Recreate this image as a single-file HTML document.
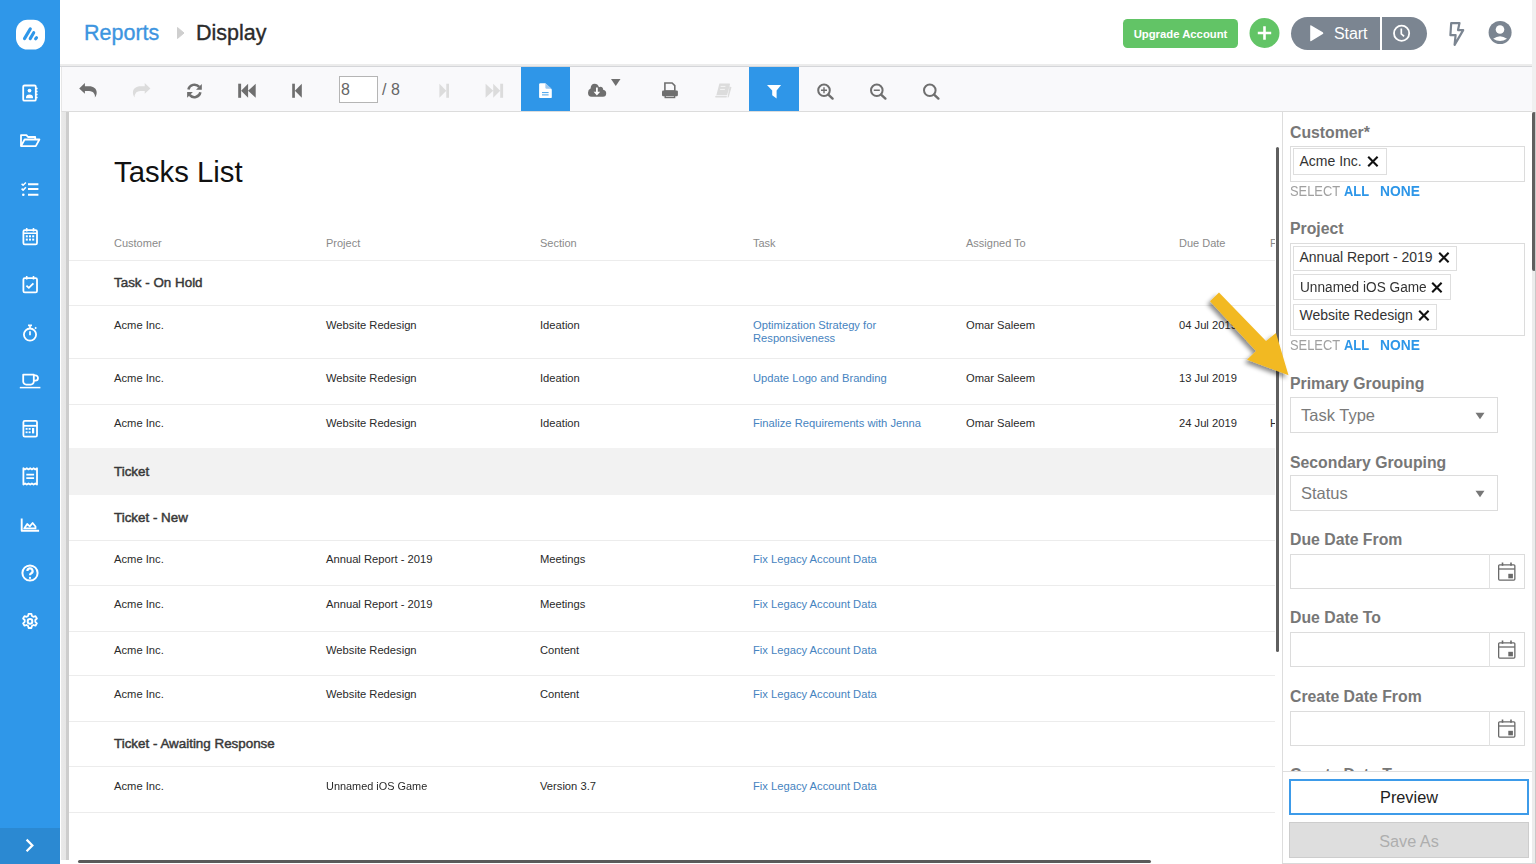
<!DOCTYPE html>
<html><head><meta charset="utf-8">
<style>
*{box-sizing:border-box;margin:0;padding:0}
html,body{width:1536px;height:864px;overflow:hidden;background:#fff;font-family:"Liberation Sans",sans-serif}
.a{position:absolute}
#side{left:0;top:0;width:60px;height:864px;background:#2f97e9}
#side .tog{left:0;top:828px;width:60px;height:36px;background:#2b89d2}
#side svg{position:absolute}
#hdr{left:60px;top:0;width:1476px;height:67px;background:#fff;border-bottom:1px solid #d5d6d9;box-shadow:inset 0 -2px 0 #ececec}
#tb{left:61px;top:67px;width:1471px;height:45px;background:#f9f9fb;border-bottom:1px solid #dcdcdc;border-left:1px solid #e6e6e6}
.ic{position:absolute}
.btnb{position:absolute;top:67px;height:44px;background:#2f96e8}
#rep{left:61px;top:112px;width:1221px;height:752px;background:#fff;overflow:hidden}
.t{position:absolute;white-space:nowrap}
.hd{font-size:11px;line-height:11px;color:#8a8a8a}
.ttl{font-size:29.3px;line-height:29.3px;color:#111}
.cell{font-size:11.2px;line-height:11.2px;color:#2a2a2a}
.grp{font-size:13.4px;line-height:13.4px;font-weight:normal;color:#383838;-webkit-text-stroke:0.45px #383838}
.lnk{font-size:11.2px;line-height:11.2px;color:#4683c0}
.rl{position:absolute;left:69px;width:1206px;height:1px;background:#ececec}
#panel{left:1282px;top:112px;width:250px;height:752px;background:#fff;border-left:1px solid #dddddd;overflow:hidden}
.lbl{position:absolute;left:7px;font-size:17px;font-weight:bold;color:#777;white-space:nowrap}
.box{position:absolute;border:1px solid #dcdcdc}
.tag{position:absolute;left:2px;height:26px;border:1px dotted #d2d2d2;font-size:14.5px;color:#333;padding:4px 0 0 7px;white-space:nowrap}
.sel{position:absolute;left:7px;font-size:14px;color:#9a9a9a;white-space:nowrap}
.sel b{color:#2d96e8;font-weight:bold}
</style></head><body>

<div id="side" class="a">
  <div class="tog a"></div>
  <svg width="60" height="864" style="left:0;top:0" viewBox="0 0 60 864">
   <rect x="16" y="19.8" width="29" height="29.8" rx="11.5" fill="#fff"/>
   <g stroke="#2f97e9" stroke-width="3.1" stroke-linecap="round" fill="none">
    <path d="M24.5 38.6L30.3 28.9M30.2 38.6L33.7 32.7M35.6 38.8L36.5 37.7"/>
   </g>
   <g stroke="#fff" stroke-width="1.8" fill="none" stroke-linejoin="round">
    <!-- contact -->
    <rect x="23.2" y="85.5" width="12.6" height="15.2" rx="1.3"/>
    <path d="M36 88.5h1.6M36 91.5h1.6M36 94.5h1.6M36 97.5h1.6" stroke-width="1.3"/>
    <circle cx="29.5" cy="90.6" r="1.9" fill="#fff" stroke="none"/>
    <path d="M26 97.6a3.5 3.2 0 0 1 7 0v0.6h-7z" fill="#fff" stroke="none"/>
    <!-- folder -->
    <path d="M21 146.1V135.1h5.4l1.6 1.9h7.2v2.6"/>
    <path d="M21 146.1l3.6-6.6h14.8l-3.6 6.6z"/>
    <!-- checklist -->
    <path d="M21.6 183.8l1.5 1.5l2.8-2.8M21.6 188.6l1.5 1.5l2.8-2.8" stroke-width="1.5"/>
    <circle cx="23.3" cy="194.7" r="1.3" fill="#fff" stroke="none"/>
    <path d="M28 184.2h10.4M28 189h10.4M28 194.7h10.4" stroke-width="1.9"/>
    <!-- calendar -->
    <rect x="23.4" y="230.2" width="13.6" height="14.2" rx="1.4"/>
    <path d="M26.7 228v3.6M33.5 228v3.6M23.4 233.2h13.6" stroke-width="1.6"/>
    <g fill="#fff" stroke="none"><rect x="25.8" y="235.3" width="2" height="2"/><rect x="29" y="235.3" width="2" height="2"/><rect x="32.2" y="235.3" width="2" height="2"/><rect x="25.8" y="238.6" width="2" height="2"/><rect x="29" y="238.6" width="2" height="2"/><rect x="32.2" y="238.6" width="2" height="2"/></g>
    <!-- calendar check -->
    <rect x="23.4" y="278.2" width="13.6" height="14.2" rx="1.4"/>
    <path d="M26.7 276v3.6M33.5 276v3.6" stroke-width="1.6"/>
    <path d="M26.4 285.6l2.4 2.3l4.6-4.5" stroke-width="1.8"/>
    <!-- stopwatch -->
    <circle cx="30" cy="334.6" r="6.1"/>
    <path d="M28 325.3h4M30 325.3v3M30 331.2v4M35 328.6l1.3-1.3" stroke-width="1.7"/>
    <!-- coffee -->
    <path d="M23.2 374.6h10.6v7a3 3 0 0 1-3 3h-4.6a3 3 0 0 1-3-3z"/>
    <path d="M33.8 375.4h1.6a2.6 2.6 0 0 1 0 5.2h-1.6"/>
    <path d="M19.8 387.6h20.6" stroke-width="1.5"/>
    <!-- calculator -->
    <rect x="23.4" y="420.8" width="13.6" height="15.8" rx="1.4"/>
    <path d="M23.4 425.8h13.6"/>
    <g fill="#fff" stroke="none"><rect x="25.6" y="428" width="2" height="1.8"/><rect x="28.6" y="428" width="2" height="1.8"/><rect x="25.6" y="431.4" width="2" height="1.8"/><rect x="28.6" y="431.4" width="2" height="1.8"/><rect x="32" y="428" width="2.2" height="5.4"/></g>
    <!-- receipt -->
    <path d="M23.4 468.2l1.7 1.2l1.7-1.2l1.7 1.2l1.7-1.2l1.7 1.2l1.7-1.2l1.7 1.2l1.7-1.2v16.4l-1.7-1.2l-1.7 1.2l-1.7-1.2l-1.7 1.2l-1.7-1.2l-1.7 1.2l-1.7-1.2l-1.7 1.2z"/>
    <path d="M26.3 474.6h7.8M26.3 478.2h7.8" stroke-width="1.8"/>
    <!-- chart -->
    <path d="M21.7 518.6v12.2h17.4" stroke-width="1.9"/>
    <path d="M24.2 528.4l3-4.4l2.6 2.3l2.8-3.3l2.9 3.5v1.9z" stroke-width="1.8"/>
    <!-- question -->
    <circle cx="30" cy="573" r="7.6" stroke-width="2"/>
    <path d="M27.4 571a2.6 2.6 0 1 1 3.9 2.2c-0.9 0.5-1.3 0.9-1.3 2" stroke-width="2.2"/>
    <circle cx="30" cy="577.9" r="1.1" fill="#fff" stroke="none"/>
    <!-- gear -->
    <path d="M28.6 613.8h2.8l0.5 2.1l1.5 0.9l2.1-0.7l1.4 2.4l-1.6 1.5v1.8l1.6 1.5l-1.4 2.4l-2.1-0.7l-1.5 0.9l-0.5 2.1h-2.8l-0.5-2.1l-1.5-0.9l-2.1 0.7l-1.4-2.4l1.6-1.5v-1.8l-1.6-1.5l1.4-2.4l2.1 0.7l1.5-0.9z"/>
    <circle cx="30" cy="621.4" r="2.3" stroke-width="2"/>
    <!-- chevron -->
    <path d="M26.6 839.6l5.8 5.8l-5.8 5.8" stroke-width="2.2" stroke-linecap="butt" stroke-linejoin="miter"/>
   </g>
  </svg>
</div>

<div id="hdr" class="a"></div>
<div class="a" style="left:1532px;top:0;width:4px;height:112px;background:#f0f0f0"></div>
<div class="t" style="left:84px;top:21px;font-size:21.5px;line-height:24px;color:#3d95e0;-webkit-text-stroke:0.35px #3d95e0">Reports</div>
<div class="t" style="left:196px;top:21px;font-size:21.5px;line-height:24px;color:#2b2b2b;-webkit-text-stroke:0.35px #2b2b2b">Display</div>
<svg class="a" style="left:0;top:0" width="1536" height="112" viewBox="0 0 1536 112">
  <path d="M177.5 27.5L184 33L177.5 38.5Z" fill="#cfcfcf" stroke="#cfcfcf" stroke-width="1" stroke-linejoin="round"/>
  <rect x="1123" y="19" width="115" height="29" rx="4.5" fill="#62c466"/>
  <circle cx="1264.5" cy="33" r="15" fill="#62c466"/>
  <path d="M1264.5 26.3v13.4M1257.8 33h13.4" stroke="#fff" stroke-width="2.6"/>
  <rect x="1291" y="17" width="136" height="33" rx="16.5" fill="#7b8591"/>
  <rect x="1380" y="17" width="2" height="33" fill="#fff"/>
  <path d="M1310.2 26.2Q1310 24.8 1311.3 25.4L1322.8 32.3Q1324 33.2 1322.8 34L1311.3 41Q1310 41.6 1310.2 40.2Z" fill="#fff"/>
  <circle cx="1401.6" cy="33.2" r="7.6" fill="none" stroke="#fff" stroke-width="1.8"/>
  <path d="M1401.3 28.4V33.9L1404.1 36.4" fill="none" stroke="#fff" stroke-width="1.7"/>
  <path d="M1451.2 23.1H1459.5L1458 30.1H1463.2L1454.6 44.9L1455.6 35.2H1450.4Z" fill="none" stroke="#7b8591" stroke-width="2.2" stroke-linejoin="round"/>
  <circle cx="1500.1" cy="32.5" r="11.5" fill="#7b8591"/>
  <circle cx="1500" cy="29.5" r="4.3" fill="#fff"/>
  <path d="M1493.2 38.8Q1500 33.5 1507 38.8Q1500 43.2 1493.2 38.8Z" fill="#fff"/>
</svg>
<div class="t" style="left:1123px;top:26px;width:115px;text-align:center;font-size:11.3px;line-height:16px;font-weight:bold;color:#fff">Upgrade Account</div>
<div class="t" style="left:1334px;top:24px;font-size:16px;line-height:19px;color:#fff;letter-spacing:-0.1px">Start</div>
<div id="tb" class="a"></div>
<div class="btnb" style="left:521px;width:49px"></div>
<div class="btnb" style="left:749px;width:50px"></div>
<div class="a" style="left:339px;top:76px;width:39px;height:27px;background:#fff;border:1px solid #b5b5b5"></div>
<div class="t" style="left:341px;top:80px;font-size:16px;line-height:19px;color:#666">8</div>
<div class="t" style="left:382px;top:80px;font-size:16px;line-height:19px;color:#666">/ 8</div>
<svg class="a" style="left:0;top:0" width="1536" height="112" viewBox="0 0 1536 112">
 <g fill="#6f6f6f">
  <path d="M79.2 88.5L84.9 83V86.2H89C93.5 86.2 96.7 88.6 96.7 92.4C96.7 94.4 96 96 94.8 97.4C95.1 96 95 94.8 94 93.4C93 92 91.5 91.1 89 91.1H84.9V93.8Z"/>
  <path fill="#dcdcdc" transform="translate(229.6 0) scale(-1 1)" d="M79.2 88.5L84.9 83V86.2H89C93.5 86.2 96.7 88.6 96.7 92.4C96.7 94.4 96 96 94.8 97.4C95.1 96 95 94.8 94 93.4C93 92 91.5 91.1 89 91.1H84.9V93.8Z"/>
  <path d="M188.4 89.6A6.2 6.2 0 0 1 199.2 86.9" fill="none" stroke="#6f6f6f" stroke-width="2.5"/>
  <path d="M196 89.8H201.8V84Z"/>
  <path d="M200.4 92.2A6.2 6.2 0 0 1 189.6 94.9" fill="none" stroke="#6f6f6f" stroke-width="2.5"/>
  <path d="M187.1 92H192.9L187.1 97.8Z"/>
  <rect x="238.2" y="83.7" width="2.9" height="14.1"/>
  <path d="M241.1 90.75L248.1 83.7V97.8Z M248.1 90.75L255.7 83.7V97.8Z"/>
  <rect x="292.2" y="83.7" width="2.7" height="14.1"/>
  <path d="M294.9 90.75L301.8 83.7V97.8Z"/>
  <g fill="#dcdcdc">
   <rect x="446.3" y="83.7" width="2.7" height="14.1"/>
   <path d="M446.3 90.75L439.4 83.7V97.8Z"/>
   <rect x="500.2" y="83.7" width="2.9" height="14.1"/>
   <path d="M500.2 90.75L493.2 83.7V97.8Z M493.2 90.75L485.6 83.7V97.8Z"/>
  </g>
  <path fill="#fff" d="M540.4 83.2H545.4L551.8 89.4V96.9Q551.8 98.1 550.6 98.1H540.4Q539.1 98.1 539.1 96.9V84.5Q539.1 83.2 540.4 83.2Z"/>
  <path fill="#9cc8f0" d="M545.4 83.2V87.6Q545.4 88.8 546.6 88.8H551.8Z"/>
  <path d="M542 92.6h6.6M542 94.9h6.6" stroke="#2f96e8" stroke-width="0.9"/>
  <path d="M591.5 96.8H603Q606.2 96.8 606.2 93.2Q606.2 90.2 603.2 89.7Q603 86.8 600.4 86.8Q599.5 86.8 599 87.2Q597.8 83.8 594.6 83.8Q590.8 83.8 590.6 88.6Q588 89.6 588 92.8Q588 96.8 591.5 96.8Z"/>
  <path fill="#fff" d="M596 87.6h1.8v4.2h2.4l-3.3 3.6l-3.3-3.6h2.4z"/>
  <path d="M611 78.9H620.5L615.75 86.1Z"/>
  <path d="M664.9 83h7.2l2.7 2.7v5.4h-9.9z" fill="none" stroke="#6f6f6f" stroke-width="1.6"/>
  <rect x="662" y="90.6" width="15.9" height="5.6" rx="1.2"/>
  <rect x="665.2" y="94.2" width="9.4" height="3.3" fill="none" stroke="#6f6f6f" stroke-width="1.4"/>
  <path fill="#dcdcdc" d="M719.4 83.4H729.4Q730.2 83.4 730 84.2L727.2 95.1H716.4Z M716.1 95.7H727L726.5 97.6H716Q714.8 97.6 715.1 96.6Z M729.5 86.5L731.5 87.2L728.7 97.2L727.5 97.6Z"/><path d="M720.6 86.4h4.8M720.1 89.4h4.8" stroke="#f7f7f7" stroke-width="0.9"/>
  <path fill="#fff" d="M767 84.9H781.1L776.6 90.5V98.4L772.2 95.2V90.5Z"/>
  <g fill="none" stroke="#6f6f6f" stroke-width="2">
   <circle cx="824" cy="90.3" r="5.8"/><path d="M828.3 94.6L832.6 98.6" stroke-width="2.4" stroke-linecap="round"/>
   <circle cx="876.8" cy="90.3" r="5.8"/><path d="M881.1 94.6L885.4 98.6" stroke-width="2.4" stroke-linecap="round"/>
   <circle cx="929.8" cy="90.3" r="5.8"/><path d="M934.1 94.6L938.4 98.6" stroke-width="2.4" stroke-linecap="round"/>
   <path d="M821 90.3h6M824 87.3v6M873.8 90.3h6" stroke-width="1.4"/>
  </g>
 </g>
</svg>

<div id="rep" class="a">
 <div class="a" style="left:0;top:0;width:8px;height:748px;background:linear-gradient(to right,#e9e9e9 0,#e6e6e6 5px,#cdcdcd 5px,#cdcdcd 8px)"></div>
 <div class="a" id="repin" style="left:-61px;top:-112px;width:1275px;height:864px;overflow:hidden">
<div class="t hd" style="left:114.0px;top:237.99px">Customer</div>
<div class="t hd" style="left:326.0px;top:237.99px">Project</div>
<div class="t hd" style="left:540.0px;top:237.99px">Section</div>
<div class="t hd" style="left:753.0px;top:237.99px">Task</div>
<div class="t hd" style="left:966.0px;top:237.99px">Assigned To</div>
<div class="t hd" style="left:1179.0px;top:237.99px">Due Date</div>
<div class="t hd" style="left:1270.0px;top:237.99px">Priority</div>
<div class="a" style="left:69px;top:448px;width:1206px;height:47px;background:#f2f2f2"></div>
<div class="rl" style="top:260.0px"></div>
<div class="rl" style="top:305.0px"></div>
<div class="rl" style="top:358.0px"></div>
<div class="rl" style="top:403.5px"></div>
<div class="rl" style="top:675.0px"></div>
<div class="rl" style="top:720.5px"></div>
<div class="rl" style="top:766.0px"></div>
<div class="rl" style="top:811.5px"></div>
<div class="rl" style="top:540.0px"></div>
<div class="rl" style="top:585.0px"></div>
<div class="rl" style="top:630.5px"></div>
<div class="t grp" style="left:114.0px;top:276.15px">Task - On Hold</div>
<div class="t grp" style="left:114.0px;top:465.05px">Ticket</div>
<div class="t grp" style="left:114.0px;top:510.55px">Ticket - New</div>
<div class="t grp" style="left:114.0px;top:736.85px">Ticket - Awaiting Response</div>
<div class="t cell" style="left:114.0px;top:319.52px">Acme Inc.</div>
<div class="t cell" style="left:326.0px;top:319.52px">Website Redesign</div>
<div class="t cell" style="left:540.0px;top:319.52px">Ideation</div>
<div class="t lnk" style="left:753.0px;top:319.52px">Optimization Strategy for</div>
<div class="t cell" style="left:966.0px;top:319.52px">Omar Saleem</div>
<div class="t cell" style="left:1179.0px;top:319.52px">04 Jul 2019</div>
<div class="t cell" style="left:114.0px;top:372.52px">Acme Inc.</div>
<div class="t cell" style="left:326.0px;top:372.52px">Website Redesign</div>
<div class="t cell" style="left:540.0px;top:372.52px">Ideation</div>
<div class="t lnk" style="left:753.0px;top:372.52px">Update Logo and Branding</div>
<div class="t cell" style="left:966.0px;top:372.52px">Omar Saleem</div>
<div class="t cell" style="left:1179.0px;top:372.52px">13 Jul 2019</div>
<div class="t cell" style="left:114.0px;top:417.82px">Acme Inc.</div>
<div class="t cell" style="left:326.0px;top:417.82px">Website Redesign</div>
<div class="t cell" style="left:540.0px;top:417.82px">Ideation</div>
<div class="t lnk" style="left:753.0px;top:417.82px">Finalize Requirements with Jenna</div>
<div class="t cell" style="left:966.0px;top:417.82px">Omar Saleem</div>
<div class="t cell" style="left:1179.0px;top:417.82px">24 Jul 2019</div>
<div class="t cell" style="left:1270.0px;top:417.82px">High</div>
<div class="t cell" style="left:114.0px;top:553.52px">Acme Inc.</div>
<div class="t cell" style="left:326.0px;top:553.52px">Annual Report - 2019</div>
<div class="t cell" style="left:540.0px;top:553.52px">Meetings</div>
<div class="t lnk" style="left:753.0px;top:553.52px">Fix Legacy Account Data</div>
<div class="t cell" style="left:114.0px;top:599.22px">Acme Inc.</div>
<div class="t cell" style="left:326.0px;top:599.22px">Annual Report - 2019</div>
<div class="t cell" style="left:540.0px;top:599.22px">Meetings</div>
<div class="t lnk" style="left:753.0px;top:599.22px">Fix Legacy Account Data</div>
<div class="t cell" style="left:114.0px;top:644.72px">Acme Inc.</div>
<div class="t cell" style="left:326.0px;top:644.72px">Website Redesign</div>
<div class="t cell" style="left:540.0px;top:644.72px">Content</div>
<div class="t lnk" style="left:753.0px;top:644.72px">Fix Legacy Account Data</div>
<div class="t cell" style="left:114.0px;top:689.22px">Acme Inc.</div>
<div class="t cell" style="left:326.0px;top:689.22px">Website Redesign</div>
<div class="t cell" style="left:540.0px;top:689.22px">Content</div>
<div class="t lnk" style="left:753.0px;top:689.22px">Fix Legacy Account Data</div>
<div class="t cell" style="left:114.0px;top:780.52px">Acme Inc.</div>
<div class="t cell" style="left:326.0px;top:780.52px"><span style="display:inline-block;transform:scaleX(0.975);transform-origin:0 0">Unnamed iOS Game</span></div>
<div class="t cell" style="left:540.0px;top:780.52px">Version 3.7</div>
<div class="t lnk" style="left:753.0px;top:780.52px">Fix Legacy Account Data</div>
<div class="t lnk" style="left:753.0px;top:332.82px">Responsiveness</div>
<div class="t ttl" style="left:114.0px;top:156.90px">Tasks List</div>
 </div>
 <div class="a" style="left:1215px;top:35px;width:3px;height:505px;background:#5f5f5f;border-radius:2px"></div>
 <div class="a" style="left:17px;top:748px;width:1073px;height:3px;background:#5a5a5a;border-radius:2px"></div>
</div>

<div id="panel" class="a"></div>
<div class="a" id="pin" style="left:0;top:0;width:1536px;height:771px;overflow:hidden;pointer-events:none">
<div class="t" style="left:1290px;top:183.90px;font-size:14.3px;line-height:14.3px;color:#a0a0a0;transform:scaleX(0.9);transform-origin:0 0">SELECT</div>
<div class="t" style="left:1343.6px;top:183.90px;font-size:14.3px;line-height:14.3px;color:#2d96e8;font-weight:bold;transform:scaleX(0.9);transform-origin:0 0">ALL</div>
<div class="t" style="left:1379.5px;top:183.90px;font-size:14.3px;line-height:14.3px;color:#2d96e8;font-weight:bold;transform:scaleX(0.965);transform-origin:0 0">NONE</div>
<div class="t" style="left:1290px;top:337.70px;font-size:14.3px;line-height:14.3px;color:#a0a0a0;transform:scaleX(0.9);transform-origin:0 0">SELECT</div>
<div class="t" style="left:1343.6px;top:337.70px;font-size:14.3px;line-height:14.3px;color:#2d96e8;font-weight:bold;transform:scaleX(0.9);transform-origin:0 0">ALL</div>
<div class="t" style="left:1379.5px;top:337.70px;font-size:14.3px;line-height:14.3px;color:#2d96e8;font-weight:bold;transform:scaleX(0.965);transform-origin:0 0">NONE</div>
<div class="t" style="left:1290.0px;top:124.93px;font-size:15.80px;line-height:15.80px;font-weight:bold;color:#777">Customer*</div>
<div class="t" style="left:1290.0px;top:220.93px;font-size:15.80px;line-height:15.80px;font-weight:bold;color:#777">Project</div>
<div class="t" style="left:1290.0px;top:376.43px;font-size:15.80px;line-height:15.80px;font-weight:bold;color:#777">Primary Grouping</div>
<div class="t" style="left:1290.0px;top:455.33px;font-size:15.80px;line-height:15.80px;font-weight:bold;color:#777">Secondary Grouping</div>
<div class="t" style="left:1290.0px;top:532.23px;font-size:15.80px;line-height:15.80px;font-weight:bold;color:#777">Due Date From</div>
<div class="t" style="left:1290.0px;top:610.33px;font-size:15.80px;line-height:15.80px;font-weight:bold;color:#777">Due Date To</div>
<div class="t" style="left:1290.0px;top:688.63px;font-size:15.80px;line-height:15.80px;font-weight:bold;color:#777">Create Date From</div>
<div class="t" style="left:1290.0px;top:767.13px;font-size:15.80px;line-height:15.80px;font-weight:bold;color:#777">Create Date To</div>
<div class="a" style="left:1290.0px;top:146.0px;width:234.5px;height:36.0px;border:1px solid #dcdcdc"></div>
<div class="a" style="left:1292.5px;top:148.3px;width:94.2px;height:26.7px;border:1px solid #dedede"></div>
<div class="t" style="left:1299.5px;top:154.05px;font-size:14.00px;line-height:14.00px;color:#333">Acme Inc.</div>
<svg class="a" style="left:1367.2px;top:155.9px" width="12" height="11" viewBox="0 0 12 11"><path d="M1.2 0.8L10.6 10.2M10.6 0.8L1.2 10.2" stroke="#111" stroke-width="2.1"/></svg>
<div class="a" style="left:1290.0px;top:242.6px;width:234.5px;height:93.4px;border:1px solid #dcdcdc"></div>
<div class="a" style="left:1292.5px;top:245.6px;width:164.5px;height:25.4px;border:1px solid #dedede"></div>
<div class="t" style="left:1299.5px;top:250.15px;font-size:14.00px;line-height:14.00px;color:#333">Annual Report - 2019</div>
<svg class="a" style="left:1437.5px;top:252.0px" width="12" height="11" viewBox="0 0 12 11"><path d="M1.2 0.8L10.6 10.2M10.6 0.8L1.2 10.2" stroke="#111" stroke-width="2.1"/></svg>
<div class="a" style="left:1292.5px;top:274.0px;width:158.2px;height:26.3px;border:1px solid #dedede"></div>
<div class="t" style="left:1299.5px;top:279.75px;font-size:14.00px;line-height:14.00px;color:#333"><span style="display:inline-block;transform:scaleX(0.975);transform-origin:0 0">Unnamed iOS Game</span></div>
<svg class="a" style="left:1431.2px;top:281.6px" width="12" height="11" viewBox="0 0 12 11"><path d="M1.2 0.8L10.6 10.2M10.6 0.8L1.2 10.2" stroke="#111" stroke-width="2.1"/></svg>
<div class="a" style="left:1292.5px;top:303.7px;width:144.5px;height:26.1px;border:1px solid #dedede"></div>
<div class="t" style="left:1299.5px;top:308.35px;font-size:14.00px;line-height:14.00px;color:#333">Website Redesign</div>
<svg class="a" style="left:1417.5px;top:310.2px" width="12" height="11" viewBox="0 0 12 11"><path d="M1.2 0.8L10.6 10.2M10.6 0.8L1.2 10.2" stroke="#111" stroke-width="2.1"/></svg>
<div class="a" style="left:1290.0px;top:397.0px;width:207.5px;height:36.0px;border:1px solid #dcdcdc"></div>
<div class="t" style="left:1301.0px;top:407.03px;font-size:16.50px;line-height:16.50px;color:#7a7a7a">Task Type</div>
<svg class="a" style="left:1475px;top:412.0px" width="10" height="8" viewBox="0 0 10 8"><path d="M0.5 0.8H9.5L5 7.2Z" fill="#777"/></svg>
<div class="a" style="left:1290.0px;top:475.0px;width:207.5px;height:36.0px;border:1px solid #dcdcdc"></div>
<div class="t" style="left:1301.0px;top:485.03px;font-size:16.50px;line-height:16.50px;color:#7a7a7a">Status</div>
<svg class="a" style="left:1475px;top:490.0px" width="10" height="8" viewBox="0 0 10 8"><path d="M0.5 0.8H9.5L5 7.2Z" fill="#777"/></svg>
<div class="a" style="left:1290.0px;top:553.7px;width:234.5px;height:35.0px;border:1px solid #dcdcdc"></div>
<div class="a" style="left:1489.0px;top:553.7px;width:1.0px;height:35.0px;background:#e2e2e2"></div>
<svg class="a" style="left:1497px;top:562.0px" width="20" height="20" viewBox="0 0 20 20"><g fill="none" stroke="#6a6a6a" stroke-width="1.3"><rect x="1.65" y="2.8" width="16.2" height="15.3" rx="1"/><path d="M1.65 7H17.85"/><path d="M5.5 0.6V3.8M14 0.6V3.8" stroke-width="1.6"/></g><rect x="11.3" y="11.8" width="4.6" height="4.5" fill="#6a6a6a"/></svg>
<div class="a" style="left:1290.0px;top:631.7px;width:234.5px;height:35.0px;border:1px solid #dcdcdc"></div>
<div class="a" style="left:1489.0px;top:631.7px;width:1.0px;height:35.0px;background:#e2e2e2"></div>
<svg class="a" style="left:1497px;top:640.0px" width="20" height="20" viewBox="0 0 20 20"><g fill="none" stroke="#6a6a6a" stroke-width="1.3"><rect x="1.65" y="2.8" width="16.2" height="15.3" rx="1"/><path d="M1.65 7H17.85"/><path d="M5.5 0.6V3.8M14 0.6V3.8" stroke-width="1.6"/></g><rect x="11.3" y="11.8" width="4.6" height="4.5" fill="#6a6a6a"/></svg>
<div class="a" style="left:1290.0px;top:710.5px;width:234.5px;height:35.0px;border:1px solid #dcdcdc"></div>
<div class="a" style="left:1489.0px;top:710.5px;width:1.0px;height:35.0px;background:#e2e2e2"></div>
<svg class="a" style="left:1497px;top:718.8px" width="20" height="20" viewBox="0 0 20 20"><g fill="none" stroke="#6a6a6a" stroke-width="1.3"><rect x="1.65" y="2.8" width="16.2" height="15.3" rx="1"/><path d="M1.65 7H17.85"/><path d="M5.5 0.6V3.8M14 0.6V3.8" stroke-width="1.6"/></g><rect x="11.3" y="11.8" width="4.6" height="4.5" fill="#6a6a6a"/></svg>
</div>
<div class="a" style="left:1283px;top:771px;width:249px;height:93px;background:#fff;border-top:1px solid #dedede"></div>
<div class="a" style="left:1289px;top:779.3px;width:240px;height:35.5px;border:2px solid #3d9be9;background:#fff"></div>
<div class="t" style="left:1289px;top:789px;width:240px;text-align:center;font-size:16.3px;line-height:16px;color:#222">Preview</div>
<div class="a" style="left:1289px;top:822.4px;width:240px;height:35.5px;border:1px solid #cdcdcd;background:#dedede"></div>
<div class="t" style="left:1289px;top:832.5px;width:240px;text-align:center;font-size:16.3px;line-height:16px;color:#aeaeae">Save As</div>
<div class="a" style="left:1532px;top:112px;width:4px;height:752px;background:#ececec"></div>
<div class="a" style="left:1532px;top:112px;width:4px;height:158.5px;background:#5f5f5f;border-radius:2px"></div>

<svg class="a" style="left:1190px;top:280px" width="110" height="110" viewBox="1190 280 110 110">
 <defs><filter id="sh" x="-30%" y="-30%" width="160%" height="160%"><feDropShadow dx="-2.5" dy="3" stdDeviation="2.2" flood-color="#000" flood-opacity="0.45"/></filter></defs>
 <path d="M1219 292.5L1266 341L1276 333L1288.5 375.3L1247 359.7L1256 351L1210 301.2Z" fill="#f2b924" filter="url(#sh)"/>
</svg>
<div class="a" style="left:1535px;top:112px;width:1px;height:752px;background:#c9c9c9"></div>
<div class="a" style="left:1282px;top:863px;width:254px;height:1px;background:#d9d9d9"></div>
</body></html>
